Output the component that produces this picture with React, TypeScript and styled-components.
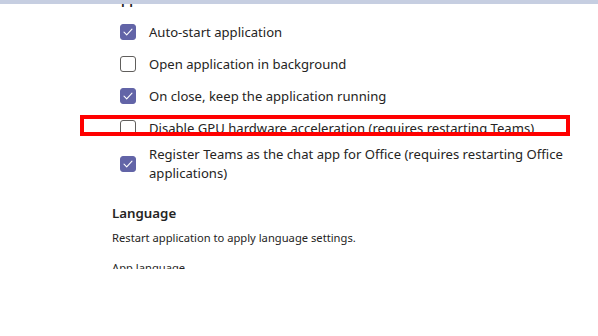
import React from "react";
import styled, { createGlobalStyle } from "styled-components";

const Global = createGlobalStyle`
  html, body { margin: 0; padding: 0; background: #ffffff; }
  body { font-family: "Noto Sans", "Open Sans", sans-serif; color: #252423; }
`;

const Page = styled.div`
  width: 598px;
  height: 336px;
  display: flex;
  flex-direction: column;
  background: #ffffff;
`;

const TopBar = styled.div`
  height: 4px;
  flex: none;
  background: #c6cee1;
  position: relative;
  z-index: 2;
`;

const ScrollArea = styled.div`
  height: 265px;
  overflow: hidden;
  flex: none;
`;

const Content = styled.div`
  margin-top: -14px;
  padding-left: 112px;
  display: flex;
  flex-direction: column;
`;

const SectionTitle = styled.div`
  font-size: 13.3px;
  font-weight: 600;
  line-height: 18px;
  color: #252423;
`;

const OptionList = styled.div`
  display: flex;
  flex-direction: column;
  padding-left: 8px;
  margin-top: 8px;
`;

const Row = styled.label`
  position: relative;
  display: flex;
  align-items: center;
  gap: 13px;
  min-height: 32px;
  padding: 1px 0;
  box-sizing: border-box;
  font-size: 13.1px;
  line-height: 19px;
  color: #252423;
`;

const Box = styled.span<{ $checked: boolean }>`
  flex: none;
  width: 16px;
  height: 16px;
  box-sizing: border-box;
  border-radius: 3px;
  display: flex;
  align-items: center;
  justify-content: center;
  background: ${(p) => (p.$checked ? "#6264a7" : "#ffffff")};
  border: 1px solid ${(p) => (p.$checked ? "#6264a7" : "#605e5c")};
`;

const RowText = styled.span`
  max-width: 425px;
`;

const Highlight = styled.div`
  position: absolute;
  left: -40px;
  top: 3px;
  width: 490px;
  height: 21px;
  box-sizing: border-box;
  border: 4px solid #ff0000;
  pointer-events: none;
`;

const LanguageTitle = styled(SectionTitle)`
  margin-top: 20px;
`;

const Note = styled.div`
  font-size: 11.2px;
  line-height: 17px;
  color: #252423;
  margin-top: 7px;
`;

const FieldLabel = styled.div`
  font-size: 11.2px;
  line-height: 17px;
  color: #252423;
  margin-top: 13px;
`;

const Check = () => (
  <svg width="10" height="8" viewBox="0 0 10 8" fill="none">
    <path d="M1 4.2 L3.7 6.8 L9 1.2" stroke="#ffffff" strokeWidth="1.1" strokeLinecap="round" strokeLinejoin="round" />
  </svg>
);

type Opt = { label: string; checked: boolean; highlight?: boolean };

const options: Opt[] = [
  { label: "Auto-start application", checked: true },
  { label: "Open application in background", checked: false },
  { label: "On close, keep the application running", checked: true },
  { label: "Disable GPU hardware acceleration (requires restarting Teams)", checked: false, highlight: true },
  { label: "Register Teams as the chat app for Office (requires restarting Office applications)", checked: true },
];

export default function App() {
  return (
    <Page>
      <Global />
      <TopBar />
      <ScrollArea>
        <Content>
          <SectionTitle>Application</SectionTitle>
          <OptionList>
            {options.map((o) => (
              <Row key={o.label}>
                <Box $checked={o.checked}>{o.checked && <Check />}</Box>
                <RowText>{o.label}</RowText>
                {o.highlight && <Highlight />}
              </Row>
            ))}
          </OptionList>
          <LanguageTitle>Language</LanguageTitle>
          <Note>Restart application to apply language settings.</Note>
          <FieldLabel>App language</FieldLabel>
        </Content>
      </ScrollArea>
    </Page>
  );
}
